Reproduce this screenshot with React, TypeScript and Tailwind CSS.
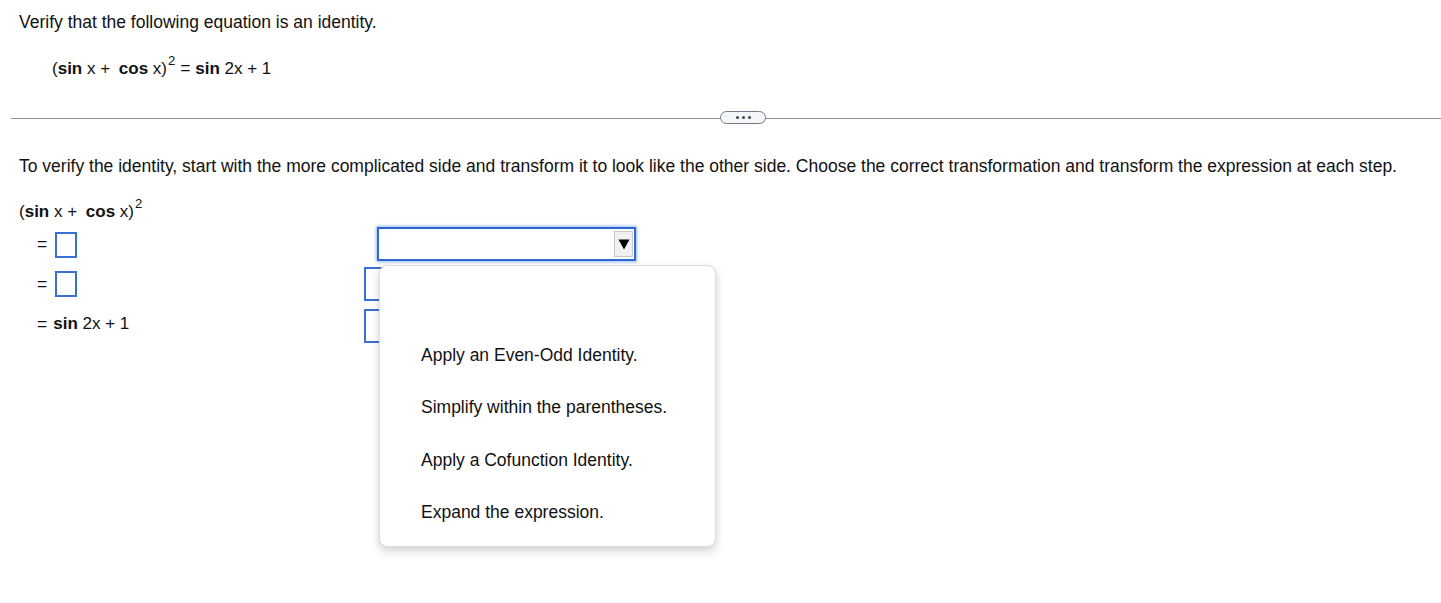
const font = { fontFamily: '"Liberation Sans", Arial, sans-serif' };

const LeftSide = () => (
  <span className="text-[17px]">
    (<b>sin</b> x + <b className="ml-1">cos</b> x)
    <sup className="relative -top-[9px] text-[13px] ml-px">2</sup>
  </span>
);

const RightSide = () => (
  <span className="text-[17px]">
    <b>sin</b> 2x + 1
  </span>
);

const options = [
  "",
  "Apply an Even-Odd Identity.",
  "Simplify within the parentheses.",
  "Apply a Cofunction Identity.",
  "Expand the expression.",
];

const AnswerBox = () => <span className="inline-block w-[22px] h-[26px] border-2 border-[#3b6fd6]" />;

export default function App() {
  return (
    <div className="relative w-[1441px] h-[603px] bg-white text-[17.5px] text-[#111] overflow-hidden" style={font}>
      <div className="pl-[19px] pt-[12px]">
        <p className="leading-[20px]">Verify that the following equation is an identity.</p>
        <p className="mt-[26px] pl-[33px] leading-[20px]">
          <LeftSide /> = <RightSide />
        </p>
      </div>

      {/* divider with ellipsis pill */}
      <div className="relative mt-[32px] ml-[11px] h-[14px] flex items-center">
        <div className="w-full h-px bg-[#8a919c]" />
        <div className="absolute left-[709px] top-0 w-[46px] h-[13px] rounded-full border border-[#6f7a88] bg-[#f4f6f8] flex items-center justify-center gap-[3px]">
          <span className="w-[3px] h-[3px] rounded-full bg-[#3a4552]" />
          <span className="w-[3px] h-[3px] rounded-full bg-[#3a4552]" />
          <span className="w-[3px] h-[3px] rounded-full bg-[#3a4552]" />
        </div>
      </div>

      <div className="pl-[19px] pt-[31px]">
        <p className="leading-[20px]">
          To verify the identity, start with the more complicated side and transform it to look like the other side.
          Choose the correct transformation and transform the expression at each step.
        </p>
        <p className="mt-[25px] leading-[20px]">
          <LeftSide />
        </p>

        <div className="mt-[3px] flex flex-col">
          {/* row 1 */}
          <div className="flex items-center h-[37px]">
            <div className="w-[345px] flex items-center gap-[8px] pl-[18px] pt-[2px]">
              <span>=</span>
              <AnswerBox />
            </div>
            <div className="ml-[13px] w-[259px] h-[34px] border-2 border-[#2f67d6] shadow-[0_0_3px_1px_#9bb8ef] bg-white flex items-center justify-end pr-[1px]">
              <div className="w-[19px] h-[26px] bg-[#f0f0f0] border border-[#c8c8c8] flex items-center justify-center">
                <svg width="12" height="12" viewBox="0 0 12 12">
                  <path d="M0.5 1.5 L11.5 1.5 L6 11.5 Z" fill="#000" />
                </svg>
              </div>
            </div>
          </div>
          {/* row 2 */}
          <div className="flex items-center h-[42px] mt-[1px]">
            <div className="w-[345px] flex items-center gap-[8px] pl-[18px]">
              <span>=</span>
              <AnswerBox />
            </div>
            <div className="w-[259px] h-[34px] border-2 border-[#3b6fd6] bg-white" />
          </div>
          {/* row 3 */}
          <div className="flex items-center h-[42px]">
            <div className="w-[345px] flex items-center gap-[6px] pl-[18px] -mt-[4px]">
              <span>=</span>
              <RightSide />
            </div>
            <div className="w-[259px] h-[34px] border-2 border-[#3b6fd6] bg-white" />
          </div>
        </div>
      </div>

      {/* open dropdown menu */}
      <div className="absolute left-[379px] top-[265px] w-[337px] h-[282px] bg-white rounded-[8px] border border-[#dcdcdc] shadow-[0_4px_10px_rgba(0,0,0,0.18)] py-[10px]">
        {options.map((o, i) => (
          <div key={i} className="h-[52.5px] flex items-center pl-[41px] leading-[20px]">
            {o}
          </div>
        ))}
      </div>
    </div>
  );
}
